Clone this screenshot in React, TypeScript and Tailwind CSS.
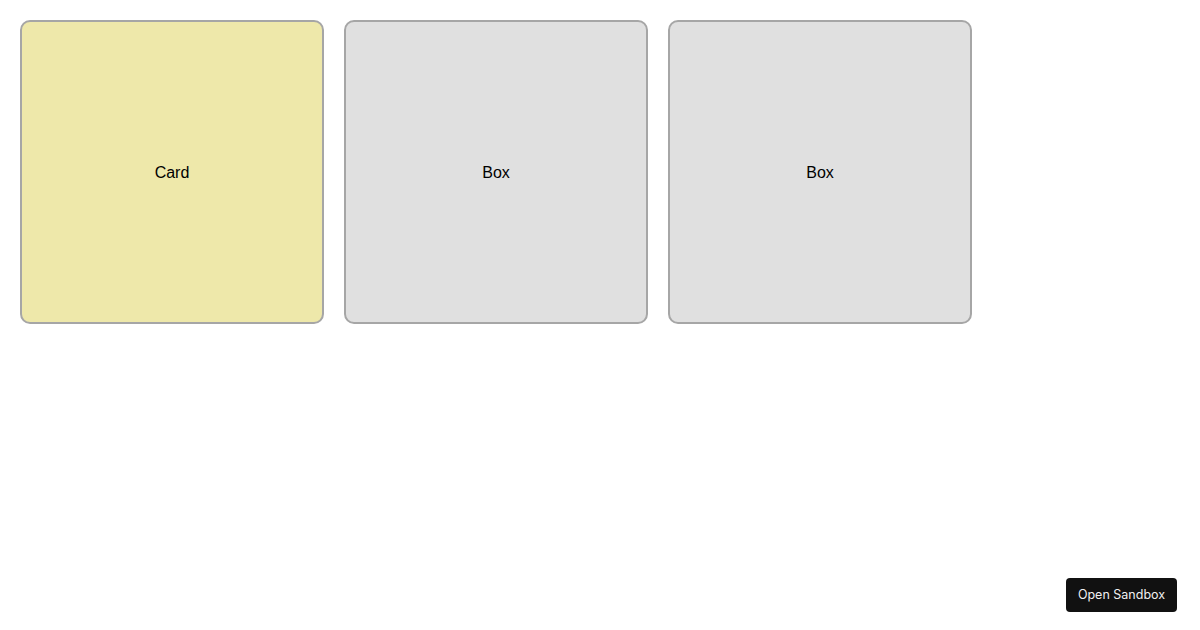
export default function App() {
  const boxes = [
    { label: "Card", bg: "bg-[#eee8aa]" },
    { label: "Box", bg: "bg-[#e0e0e0]" },
    { label: "Box", bg: "bg-[#e0e0e0]" },
  ];

  return (
    <div className="min-h-[630px] bg-white font-['Liberation_Sans',Arial,sans-serif] text-black">
      <div className="flex gap-5 p-5">
        {boxes.map((b, i) => (
          <div
            key={i}
            className={`flex h-[304px] w-[304px] items-center justify-center rounded-[10px] border-2 border-[#a6a6a6] pt-[2px] ${b.bg} text-base`}
          >
            {b.label}
          </div>
        ))}
      </div>

      <button className="fixed bottom-[18px] right-[23px] h-[34px] w-[111px] rounded-[4px] bg-[#111111] pt-px font-['Inter',sans-serif] text-[12.5px] text-[#f0f0f0]">
        Open Sandbox
      </button>
    </div>
  );
}
